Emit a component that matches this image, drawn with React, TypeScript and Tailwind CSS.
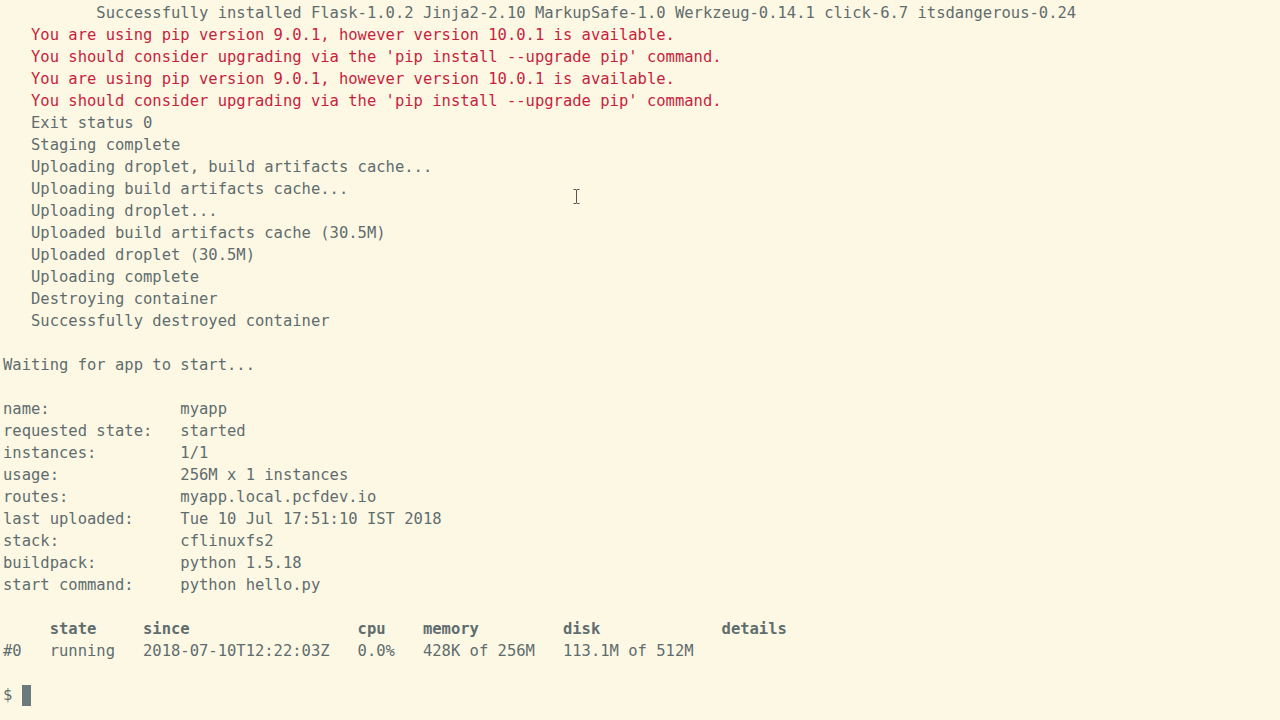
const gray = 'text-[#5f6d6f]';

type Line = { text: string; tone?: 'red' | 'bold' };

const lines: Line[] = [
  { text: '          Successfully installed Flask-1.0.2 Jinja2-2.10 MarkupSafe-1.0 Werkzeug-0.14.1 click-6.7 itsdangerous-0.24' },
  { text: '   You are using pip version 9.0.1, however version 10.0.1 is available.', tone: 'red' },
  { text: "   You should consider upgrading via the 'pip install --upgrade pip' command.", tone: 'red' },
  { text: '   You are using pip version 9.0.1, however version 10.0.1 is available.', tone: 'red' },
  { text: "   You should consider upgrading via the 'pip install --upgrade pip' command.", tone: 'red' },
  { text: '   Exit status 0' },
  { text: '   Staging complete' },
  { text: '   Uploading droplet, build artifacts cache...' },
  { text: '   Uploading build artifacts cache...' },
  { text: '   Uploading droplet...' },
  { text: '   Uploaded build artifacts cache (30.5M)' },
  { text: '   Uploaded droplet (30.5M)' },
  { text: '   Uploading complete' },
  { text: '   Destroying container' },
  { text: '   Successfully destroyed container' },
  { text: '' },
  { text: 'Waiting for app to start...' },
  { text: '' },
  { text: 'name:              myapp' },
  { text: 'requested state:   started' },
  { text: 'instances:         1/1' },
  { text: 'usage:             256M x 1 instances' },
  { text: 'routes:            myapp.local.pcfdev.io' },
  { text: 'last uploaded:     Tue 10 Jul 17:51:10 IST 2018' },
  { text: 'stack:             cflinuxfs2' },
  { text: 'buildpack:         python 1.5.18' },
  { text: 'start command:     python hello.py' },
  { text: '' },
  { text: '     state     since                  cpu    memory         disk             details', tone: 'bold' },
  { text: '#0   running   2018-07-10T12:22:03Z   0.0%   428K of 256M   113.1M of 512M' },
  { text: '' },
];

export default function App() {
  return (
    <div className="relative w-[1280px] h-[720px] overflow-hidden bg-[#fdf8e4] pt-[2px] pl-[3px] font-['DejaVu_Sans_Mono','Liberation_Mono',monospace] text-[15.5px] leading-[22px]">
      {lines.map((l, i) => (
        <div
          key={i}
          className={`h-[22px] whitespace-pre ${
            l.tone === 'red' ? 'text-[#c71f3e]' : gray
          } ${l.tone === 'bold' ? 'font-bold' : ''}`}
        >
          {l.text}
        </div>
      ))}
      <div className={`h-[22px] flex items-center whitespace-pre ${gray}`}>
        <span>$ </span>
        <span className="w-[9px] h-[21px] bg-[#6b7b7d]" />
      </div>

      {/* mouse I-beam */}
      <svg className="absolute left-[573px] top-[189px]" width="7" height="15" viewBox="0 0 7 15">
        <path d="M0.5 0.5h2.5l0.5 0.5 0.5-0.5h2.5M3.5 1v13M0.5 14.5h2.5l0.5-0.5 0.5 0.5h2.5" stroke="#555" strokeWidth="1" fill="none" />
      </svg>
    </div>
  );
}
